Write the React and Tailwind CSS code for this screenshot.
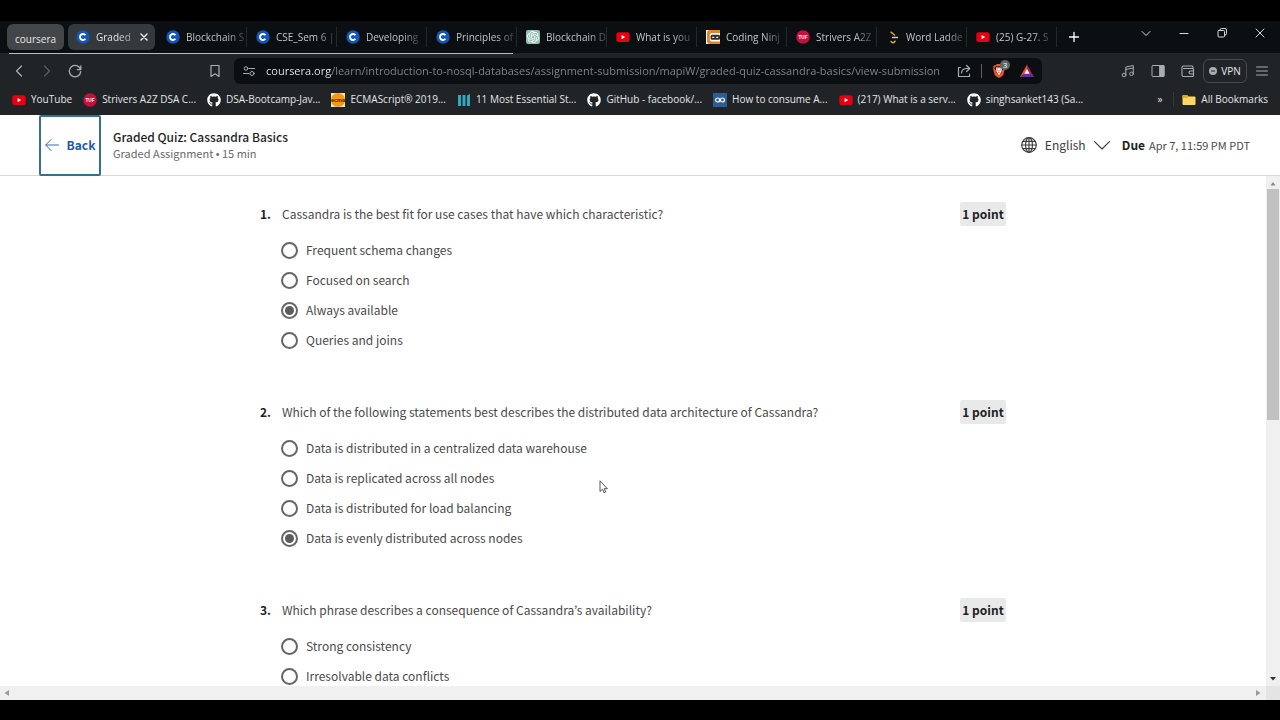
import React, { useState } from 'react';
import { FaGithub } from 'react-icons/fa';
import { SiOpenai, SiBrave } from 'react-icons/si';

const CourseraIcon = () => (
  <svg viewBox="0 0 14 14" className="size-3.5 shrink-0">
    <circle cx="7" cy="7" r="6.7" fill="#1557b8" />
    <path d="M9.4 5.2A3 3 0 1 0 9.4 8.8" fill="none" stroke="#fff" strokeWidth="1.9" />
  </svg>
);

const YoutubeIcon = () => (
  <svg viewBox="0 0 14 14" className="size-3.5 shrink-0">
    <rect x="0.3" y="2.2" width="13.4" height="9.8" rx="2.6" fill="#e60012" />
    <path d="M5.6 5v4.2L9.2 7.1z" fill="#fff" />
  </svg>
);

const TufIcon = () => (
  <svg viewBox="0 0 14 14" className="size-3.5 shrink-0">
    <circle cx="7" cy="7" r="6.8" fill="#c4103b" />
    <text x="7" y="8.7" textAnchor="middle" fontSize="4.6" fontWeight="700" fill="#fff" fontFamily="Liberation Sans, sans-serif">TUF</text>
  </svg>
);

const ChatIcon = () => (
  <span className="flex size-3.5 shrink-0 items-center justify-center rounded-xs bg-[#8fc0b2] text-white">
    <SiOpenai className="size-3" />
  </span>
);

const NinjasIcon = () => (
  <svg viewBox="0 0 14 14" className="size-3.5 shrink-0">
    <rect width="14" height="14" fill="#fff" />
    <path d="M14 0H4Q1 0 1 3v8q0 3 3 3h10v-2.6H6Q3.8 11.4 3.8 9.5V5Q3.8 3 6 3h8z" fill="#e0862a" />
    <rect x="4.6" y="4.7" width="9.4" height="5" rx="1.5" fill="#3a2a20" />
    <path d="M6.2 7.3h2M10.2 7.3h2" stroke="#fff" strokeWidth="1.3" />
  </svg>
);

const LeetcodeIcon = () => (
  <svg viewBox="0 0 14 14" className="size-3.5 shrink-0" fill="none" strokeLinecap="round">
    <path d="M5 2.2 8.500 5" stroke="#e8a33d" strokeWidth="1.5" />
    <path d="M6.500 7.5h5" stroke="#c9ccd0" strokeWidth="1.3" />
    <path d="M5 11.500 6.500 12.700q1 .5 2.500-1.500" stroke="#e8a33d" strokeWidth="1.5" />
  </svg>
);

const EcmaIcon = () => (
  <svg viewBox="0 0 14 14" className="size-3.5 shrink-0">
    <rect width="14" height="14" fill="#f7e3bb" />
    <circle cx="7" cy="7" r="7" fill="#f39a14" />
    <text x="7" y="8.8" textAnchor="middle" fontSize="5.5" fontWeight="700" fill="#3b2503" fontFamily="Liberation Sans, sans-serif">ecma</text>
  </svg>
);

const BarsIcon = () => (
  <svg viewBox="0 0 14 14" className="size-3.5 shrink-0" fill="#2fa9bf">
    <rect x="1" y="2" width="3" height="11" />
    <rect x="5.5" y="2" width="3" height="11" />
    <path d="M10 2.5 13 1v12h-3z" />
  </svg>
);

const LoopIcon = () => (
  <svg viewBox="0 0 14 14" className="size-3.5 shrink-0">
    <rect width="14" height="14" fill="#2c5c94" />
    <circle cx="4.6" cy="7" r="2" fill="none" stroke="#fff" strokeWidth="1.2" />
    <circle cx="9.4" cy="7" r="2" fill="none" stroke="#fff" strokeWidth="1.2" />
  </svg>
);

const GithubIcon = () => <FaGithub className="size-3.5 shrink-0 text-white" />;

const Icon = ({ className, children }) => (
  <svg viewBox="0 0 14 14" className={className} fill="none" stroke="currentColor" strokeWidth="1" strokeLinecap="round" strokeLinejoin="round">
    {children}
  </svg>
);

const tabs = [
  { title: 'Blockchain S', icon: CourseraIcon },
  { title: 'CSE_Sem 6 |', icon: CourseraIcon },
  { title: 'Developing', icon: CourseraIcon },
  { title: 'Principles of', icon: CourseraIcon },
  { title: 'Blockchain D', icon: ChatIcon },
  { title: 'What is you', icon: YoutubeIcon },
  { title: 'Coding Ninj', icon: NinjasIcon },
  { title: 'Strivers A2Z', icon: TufIcon },
  { title: 'Word Ladde', icon: LeetcodeIcon },
  { title: '(25) G-27. S', icon: YoutubeIcon },
];

const bookmarks = [
  { title: 'YouTube', icon: YoutubeIcon },
  { title: 'Strivers A2Z DSA C...', icon: TufIcon },
  { title: 'DSA-Bootcamp-Jav...', icon: GithubIcon },
  { title: 'ECMAScript® 2019...', icon: EcmaIcon },
  { title: '11 Most Essential St...', icon: BarsIcon },
  { title: 'GitHub - facebook/...', icon: GithubIcon },
  { title: 'How to consume A...', icon: LoopIcon },
  { title: '(217) What is a serv...', icon: YoutubeIcon },
  { title: 'singhsanket143 (Sa...', icon: GithubIcon },
];

const questions = [
  {
    id: 1,
    text: 'Cassandra is the best fit for use cases that have which characteristic?',
    options: ['Frequent schema changes', 'Focused on search', 'Always available', 'Queries and joins'],
  },
  {
    id: 2,
    text: 'Which of the following statements best describes the distributed data architecture of Cassandra?',
    options: [
      'Data is distributed in a centralized data warehouse',
      'Data is replicated across all nodes',
      'Data is distributed for load balancing',
      'Data is evenly distributed across nodes',
    ],
  },
  {
    id: 3,
    text: 'Which phrase describes a consequence of Cassandra’s availability?',
    options: ['Strong consistency', 'Irresolvable data conflicts'],
  },
];

const TabStrip = () => (
  <div className="flex h-8 items-center bg-[#0c0f12] pl-[7px] text-[10px] text-[#c3c6c9]">
    <button className="mr-1 h-[26px] w-[57px] shrink-0 rounded-md bg-[#424649] pt-1 font-medium text-[#e4e6e8]">coursera</button>
    <div className="mr-0.5 flex h-[26px] w-[87px] shrink-0 items-center rounded-md bg-[#33393d] pr-1 pl-2">
      <button className="flex min-w-0 flex-1 items-center gap-1.5 text-[#e4e6e8]">
        <CourseraIcon />
        <span className="[mask-image:linear-gradient(to_right,black_60%,#0008)] whitespace-nowrap">Graded</span>
      </button>
      <button aria-label="Close tab" className="text-white">
        <Icon className="size-3.5"><path d="m4 4 6 6M10 4l-6 6" strokeWidth="1.4" /></Icon>
      </button>
    </div>
    {tabs.map((tab, index) => (
      <button key={index} className="flex h-5 w-[90px] items-center gap-1.5 border-r border-[#24282c] pl-[9px]">
        <tab.icon />
        <span className="[mask-image:linear-gradient(to_right,black_70%,#0004)] whitespace-nowrap">{tab.title}</span>
      </button>
    ))}
    <button aria-label="New tab" className="ml-2.5 text-white">
      <Icon className="size-3.5"><path d="M7 2.5v9M2.5 7h9" strokeWidth="1.3" /></Icon>
    </button>
    <div className="ml-auto flex shrink-0 items-center gap-6 pr-[13px] pb-2 text-[#d6d8da]">
      <button aria-label="Search tabs"><Icon className="size-3.5"><path d="M3 5.5 7 9.5l4-4" /></Icon></button>
      <button aria-label="Minimize"><Icon className="size-3.5"><path d="M3 7.5h8" /></Icon></button>
      <button aria-label="Restore">
        <Icon className="size-3.5">
          <rect x="3" y="4.5" width="6.5" height="6.5" rx="1" />
          <path d="M5 4.5V4q0-1.5 1.5-1.5h3.5Q11.5 2.5 11.5 4v3.5Q11.5 9 10 9h-.5" />
        </Icon>
      </button>
      <button aria-label="Close"><Icon className="size-3.5"><path d="m3 3 8 8M11 3l-8 8" /></Icon></button>
    </div>
  </div>
);

const Toolbar = () => {
  const [url, setUrl] = useState(
    'coursera.org/learn/introduction-to-nosql-databases/assignment-submission/mapiW/graded-quiz-cassandra-basics/view-submission'
  );

  return (
    <div className="flex h-[34px] items-center text-[#a9adb0]">
      <div className="flex w-[234px] shrink-0 items-center gap-3.5 pr-3 pl-3">
        <button aria-label="Back"><Icon className="size-3.5"><path d="M9.5 2 4.5 7l5 5" strokeWidth="1.3" /></Icon></button>
        <button aria-label="Forward" className="text-[#5b6064]"><Icon className="size-3.5"><path d="m4.5 2 5 5-5 5" strokeWidth="1.2" /></Icon></button>
        <button aria-label="Reload">
          <Icon className="size-3.5"><path d="M12.5 5.5A5.7 5.7 0 1 0 12.7 7.6M12.8 2v3.6H9.3" strokeWidth="1.3" /></Icon>
        </button>
        <button aria-label="Bookmark this page" className="ml-auto">
          <Icon className="size-3.5"><path d="M3 1.5h8v11L7 9.8l-4 2.7z" strokeWidth="1.2" /></Icon>
        </button>
      </div>
      <div className="flex h-[26px] min-w-0 flex-1 items-center rounded-md bg-[#0c0f12] px-2">
        <Icon className="mr-2.5 size-3.5 shrink-0">
          <circle cx="4" cy="4.5" r="1.8" /><path d="M7 4.5h5.5M1.5 9.5H7" /><circle cx="10" cy="9.5" r="2" />
        </Icon>
        <input
          type="text"
          aria-label="Address"
          value={url}
          onChange={(e) => setUrl(e.target.value)}
          className="min-w-0 flex-1 bg-[linear-gradient(to_right,#eceef0_66px,#84898d_66px)] bg-clip-text text-[11px] text-transparent outline-none"
        />
        <button aria-label="Share" className="ml-2.5">
          <Icon className="size-3.5"><path d="M3.5 3.500H1.500v9h11V10M4.500 9q.5-4.500 5-4.500h2.500M9.500 1.500l3.200 3L9.500 7.500" strokeWidth="1.2" /></Icon>
        </button>
        <span className="mx-2.5 h-3.5 w-px bg-[#5b6064]" />
        <button aria-label="Brave Shields" className="relative">
          <svg viewBox="0 0 14 14" className="size-3.5"><path d="M4 3.5h6L9.5 8 7 11.5 4.5 8z" fill="#fff" /></svg>
          <SiBrave className="absolute inset-0 size-3.5 text-[#f0532d]" />
          <span className="absolute -top-1 left-2 flex size-2.5 items-center justify-center rounded-full bg-[#5f6468] text-[8px] leading-none text-white">3</span>
        </button>
        <button aria-label="Brave Rewards" className="ml-3.5">
          <svg viewBox="0 0 14 14" className="size-3.5">
            <path d="M7 .5 0 13h7z" fill="#ff4724" />
            <path d="M7 .5 14 13H7z" fill="#9e1f63" />
            <path d="M0 13h14l-4-3.5H4z" fill="#662d91" />
            <path d="M7 5 4.3 9.8h5.4z" fill="#fff" />
          </svg>
        </button>
      </div>
      <div className="flex w-[238px] shrink-0 items-center justify-end gap-4 pr-[11px]">
        <button aria-label="Playlist">
          <Icon className="size-3.5"><circle cx="3" cy="11" r="1.8" /><circle cx="10.5" cy="9.8" r="1.8" /><path d="M4.8 11V3l7.5-1.5v8.3M4.8 5.5l7.5-1.5" /></Icon>
        </button>
        <button aria-label="Sidebar">
          <Icon className="size-3.5"><rect x="1" y="1.5" width="12" height="11" rx="1" /><path d="M9 1.5H13v11H9z" fill="currentColor" /></Icon>
        </button>
        <button aria-label="Wallet">
          <Icon className="size-3.5"><path d="M12 4.5V3q0-1-1-1H2.5Q1 2 1 3.5V11q0 1.5 1.5 1.5h9q1 0 1-1v-6q0-1-1-1H2.5M12.5 7H9.5a1.4 1.4 0 0 0 0 3h3" strokeWidth="1.1" /></Icon>
        </button>
        <button className="-mx-2 flex h-6 w-11 items-center justify-center gap-1 rounded-md border border-[#454a4e] text-[10px] text-[#e4e6e8]">
          <svg viewBox="0 0 8 8" className="size-2"><circle cx="4" cy="4" r="4" fill="#a9adb0" /><path d="M2 4h4" stroke="#202427" /></svg>
          VPN
        </button>
        <button aria-label="Menu"><Icon className="size-3.5"><path d="M1.5 3h11M1.5 7h11M1.5 11h11" /></Icon></button>
      </div>
    </div>
  );
};

const BookmarksBar = () => (
  <nav className="flex h-[27px] items-center gap-[11px] px-3 pb-1 text-[10px] whitespace-nowrap text-[#e4e6e8]">
    {bookmarks.map((bookmark) => (
      <a key={bookmark.title} href="#" className="flex items-center gap-[5px]">
        <bookmark.icon />
        {bookmark.title}
      </a>
    ))}
    <button aria-label="More bookmarks" className="ml-auto">»</button>
    <a href="#" className="flex items-center gap-[5px] border-l border-[#34393d] pl-2">
      <svg viewBox="0 0 14 14" className="size-3.5"><path d="M.5 3q0-1 1-1H5l1.5 1.5h6q1 0 1 1V11q0 1-1 1h-11q-1 0-1-1z" fill="#ffd75e" /><path d="M.5 3q0-1 1-1H5l1.5 1.5L5 5H.5z" fill="#e0a92e" /></svg>
      All Bookmarks
    </a>
  </nav>
);

const QuizHeader = () => (
  <header className="flex h-[61px] shrink-0 items-center border-b border-[#d8d8d8] pr-[30px] pl-[39px]">
    <button className="flex h-[61px] w-[62px] items-center justify-center gap-2 rounded-xs border-2 border-[#35708c] text-xs font-bold text-[#1f5ba6]">
      <Icon className="size-3.5"><path d="M13.5 7H1M6 1.5.7 7 6 12.5" strokeWidth="0.9" /></Icon>
      Back
    </button>
    <div className="ml-3">
      <h1 className="text-xs leading-4 font-medium text-[#1f1f1f]">Graded Quiz: Cassandra Basics</h1>
      <p className="text-[11px] leading-4 text-[#6a6a6a]">Graded Assignment • 15 min</p>
    </div>
    <label className="ml-auto flex items-center text-xs text-[#3c3c3c]">
      <Icon className="mr-2 size-4">
        <circle cx="7" cy="7" r="6.4" /><ellipse cx="7" cy="7" rx="3" ry="6.4" /><path d="M.6 7h12.8M1.6 3.8h10.8M1.6 10.2h10.8M7 .6v12.8" />
      </Icon>
      <select aria-label="Language" className="appearance-none outline-none">
        <option>English</option>
      </select>
      <Icon className="ml-2 size-4"><path d="M.5 4 7 10.5 13.5 4" /></Icon>
    </label>
    <p className="ml-3 flex items-center gap-1 text-[11px] text-[#4a4a4a]">
      <span className="text-xs font-bold text-[#1f1f1f]">Due</span>
      Apr 7, 11:59 PM PDT
    </p>
  </header>
);

const Question = ({ question, selected, onSelect }) => (
  <fieldset className="mb-[45px]">
    <div className="flex h-6 items-center">
      <span className="w-[22px] font-bold text-[#1f1f1f]">{question.id}.</span>
      <p>{question.text}</p>
      <span className="ml-auto flex h-6 w-[46px] items-center justify-center rounded-xs bg-[#e8eaea] font-bold text-[#1f1f1f]">1 point</span>
    </div>
    <div className="mt-[9px] pl-[21px]">
      {question.options.map((option) => (
        <label key={option} className="flex h-[30px] items-center gap-2">
          <input
            type="radio"
            name={`question-${question.id}`}
            checked={selected === option}
            onChange={() => onSelect(option)}
            className="size-[17px] appearance-none rounded-full border-2 border-[#666666] checked:bg-[#5c5c5c] checked:bg-clip-content checked:p-0.5"
          />
          {option}
        </label>
      ))}
    </div>
  </fieldset>
);

const Arrow = ({ className, d }) => (
  <svg viewBox="0 0 8 8" className={className} fill="currentColor"><path d={d} /></svg>
);

export default function App() {
  const [answers, setAnswers] = useState({
    1: 'Always available',
    2: 'Data is evenly distributed across nodes',
  });

  return (
    <div className="flex h-screen flex-col overflow-hidden bg-black pt-[21px] pb-5 font-['Open_Sans',sans-serif]">
      <TabStrip />
      <div className="bg-[#202427]">
        <div className="ml-[9px] h-px w-[504px] bg-[#b9bcbe]" />
        <Toolbar />
        <BookmarksBar />
      </div>

      <main className="relative flex min-h-0 flex-1 flex-col bg-white font-['Noto_Sans_CJK_KR',sans-serif]">
        <QuizHeader />
        <div className="flex min-h-0 flex-1">
          <div className="min-w-0 flex-1 overflow-hidden pt-[26px]">
            <form className="mx-auto w-full max-w-[746px] text-xs leading-5 text-[#4a4a4a]">
              {questions.map((question) => (
                <Question
                  key={question.id}
                  question={question}
                  selected={answers[question.id]}
                  onSelect={(option) => setAnswers({ ...answers, [question.id]: option })}
                />
              ))}
            </form>
          </div>
          <div className="flex w-3.5 flex-col items-center bg-[#f0f0f0] py-1 text-[#8a8a8a]">
            <Arrow className="size-2" d="M4 2 6.5 5.5h-5z" />
            <div className="mt-px h-[231px] w-3 bg-[#c1c1c1]" />
            <Arrow className="mt-auto size-2 text-[#333333]" d="M4 6.5 7 3H1z" />
          </div>
        </div>
        <div className="flex h-3.5 items-center justify-between bg-[#f0f0f0] pl-[3px] text-[#9a9a9a]">
          <Arrow className="size-2" d="M1.5 4 6 1v6z" />
          <div className="flex items-center gap-1">
            <Arrow className="size-2" d="M6.5 4 2 1v6z" />
            <div className="size-3.5 bg-[#e4e4e4]" />
          </div>
        </div>
        <svg viewBox="0 0 9 14" className="absolute top-[365px] left-[599px] h-3.5 w-[9px]">
          <path d="M1 .8v10.7l2.5-2.3L5 12.8l1.7-.8L5.2 8.7h3.2z" fill="#fff" stroke="#444" strokeWidth="0.9" />
        </svg>
      </main>
    </div>
  );
}
